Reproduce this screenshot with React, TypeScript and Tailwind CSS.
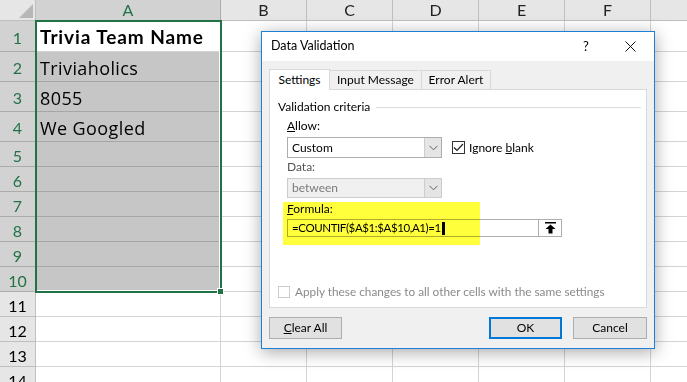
import React from 'react';

const colHeaders = [
  { label: 'A', w: 'w-[185px]', sel: true },
  { label: 'B', w: 'w-[86px]', sel: false },
  { label: 'C', w: 'w-[86px]', sel: false },
  { label: 'D', w: 'w-[86px]', sel: false },
  { label: 'E', w: 'w-[86px]', sel: false },
  { label: 'F', w: 'w-[86px]', sel: false },
];

const rows = [
  { n: 1, h: 'h-[31px]', text: 'Trivia Team Name', bold: true },
  { n: 2, h: 'h-[30px]', text: 'Triviaholics' },
  { n: 3, h: 'h-[30px]', text: '8055' },
  { n: 4, h: 'h-[30px]', text: 'We Googled' },
  { n: 5, h: 'h-[25px]' },
  { n: 6, h: 'h-[25px]' },
  { n: 7, h: 'h-[25px]' },
  { n: 8, h: 'h-[25px]' },
  { n: 9, h: 'h-[25px]' },
  { n: 10, h: 'h-[25px]' },
  { n: 11, h: 'h-[25px]' },
  { n: 12, h: 'h-[25px]' },
  { n: 13, h: 'h-[25px]' },
  { n: 14, h: 'h-[25px]' },
];

const sheetFont = { fontFamily: 'Lato, "Noto Sans", sans-serif' };
const cellFont = { fontFamily: '"Open Sans", "Noto Sans", sans-serif' };

function Chevron() {
  return (
    <svg width="9" height="6" viewBox="0 0 9 6">
      <polyline points="0.5,0.8 4.5,4.8 8.5,0.8" fill="none" stroke="#606060" strokeWidth="1" />
    </svg>
  );
}

function Combo({ value, disabled }: { value: string; disabled?: boolean }) {
  return (
    <div
      className={`flex w-[155px] border ${disabled ? 'h-[20px] border-[#cccccc] bg-[#f0f0f0] text-[#7a7a7a]' : 'h-[21px] border-[#adadad] bg-white text-black'}`}
    >
      <div className="flex-1 flex items-center pl-[4px]">{value}</div>
      <div className="w-[17px] flex items-center justify-center bg-[#e5e5e5] border-l border-[#cccccc]">
        <Chevron />
      </div>
    </div>
  );
}

function SpreadSheet() {
  return (
    <div className="flex flex-col w-full" style={sheetFont}>
      <div className="flex h-[21px]">
        <div className="w-[36px] shrink-0 bg-[#e6e6e6] border-r border-b border-[#bfbfbf] flex items-end justify-end p-[2px]">
          <svg width="14" height="14" viewBox="0 0 14 14">
            <polygon points="14,0 14,14 0,14" fill="#b7b7b7" />
          </svg>
        </div>
        {colHeaders.map((c) => (
          <div
            key={c.label}
            className={`${c.w} shrink-0 flex items-center justify-center text-[16px] border-r border-b ${c.sel ? 'bg-[#d2d2d2] text-[#217346] border-[#ababab]' : 'bg-[#e6e6e6] text-[#222222] border-[#bfbfbf]'}`}
          >
            {c.label}
          </div>
        ))}
        <div className="flex-1 bg-[#e6e6e6] border-b border-[#bfbfbf]" />
      </div>
      {rows.map((r) => {
        const sel = r.n <= 10;
        return (
          <div key={r.n} className={`flex ${r.h}`}>
            <div
              className={`w-[36px] shrink-0 flex items-center justify-center pt-[3px] text-[16px] border-r border-b ${sel ? 'bg-[#d2d2d2] text-[#217346] border-[#ababab]' : 'bg-[#e6e6e6] text-black border-[#bfbfbf]'}`}
            >
              {r.n}
            </div>
            <div
              className={`w-[185px] shrink-0 flex items-center pl-[4px] pt-[3px] text-black border-r border-b ${sel && r.n > 1 ? 'bg-[#c6c6c6] border-[#a6a6a6]' : 'bg-white border-[#d4d4d4]'} ${r.bold ? 'font-bold text-[19px] tracking-[0.9px]' : 'text-[18px] tracking-[0.4px]'}`}
              style={r.bold ? sheetFont : cellFont}
            >
              {r.text}
            </div>
            {colHeaders.slice(1).map((c) => (
              <div key={c.label} className={`${c.w} shrink-0 border-r border-b border-[#d4d4d4]`} />
            ))}
            <div className="flex-1 border-b border-[#d4d4d4]" />
          </div>
        );
      })}
    </div>
  );
}

function Dialog() {
  return (
    <div
      className="absolute left-[261px] top-[31px] w-[394px] h-[318px] border border-[#1c80d6] bg-[#f0f0f0] shadow-[0_3px_16px_rgba(0,0,0,0.35)] flex flex-col text-[12px] text-black"
      style={{ fontFamily: 'Lato, "Noto Sans", sans-serif' }}
    >
      <div className="h-[29px] bg-white flex items-center pl-[9px]">
        <span className="flex-1 text-[12.5px]">Data Validation</span>
        <span className="w-[20px] mr-[14px] text-center text-[13px]">?</span>
        <span className="w-[44px] flex justify-center pr-[4px]">
          <svg width="11" height="11" viewBox="0 0 11 11">
            <path d="M0.5 0.5 L10.5 10.5 M10.5 0.5 L0.5 10.5" stroke="#111" strokeWidth="1" />
          </svg>
        </span>
      </div>
      <div className="flex flex-col px-[7px] pt-[7px]">
        <div className="flex items-end h-[21px]">
          <div className="h-[21px] w-[61px] bg-white border border-b-0 border-[#d9d9d9] flex items-center justify-center relative top-[1px] z-10">
            Settings
          </div>
          <div className="h-[19px] w-[92px] border border-l-0 border-b-0 border-[#d9d9d9] flex items-center justify-center">
            Input Message
          </div>
          <div className="h-[19px] w-[69px] border border-l-0 border-b-0 border-[#d9d9d9] flex items-center justify-center">
            Error Alert
          </div>
        </div>
        <div className="relative h-[219px] bg-white border border-[#d9d9d9] flex flex-col">
          <div className="flex items-center pl-[8px] pr-[5px] mt-[9px] h-[16px]">
            <span>Validation criteria</span>
            <div className="flex-1 ml-[6px] h-px bg-[#dcdcdc]" />
          </div>
          <div className="pl-[17px] flex flex-col">
            <div className="mt-[3px] h-[16px] flex items-center">
              <span>
                <span className="underline">A</span>llow:
              </span>
            </div>
            <div className="flex items-center mt-[3px]">
              <Combo value="Custom" />
              <div className="ml-[10px] w-[13px] h-[13px] border border-[#333333] flex items-center justify-center">
                <svg width="11" height="9" viewBox="0 0 11 9">
                  <polyline points="1,4.5 4,7.5 10,1" fill="none" stroke="#222" strokeWidth="1.2" />
                </svg>
              </div>
              <span className="ml-[4px]">
                Ignore <span className="underline">b</span>lank
              </span>
            </div>
            <div className="mt-[1px] h-[16px] flex items-center">
              <span className="text-[#555555]">Data:</span>
            </div>
            <div className="mt-[3px]">
              <Combo value="between" disabled />
            </div>
            <div className="mt-[3px] h-[16px] flex items-center">
              <span>
                <span className="underline">F</span>ormula:
              </span>
            </div>
            <div className="flex mt-[2px] h-[18px]">
              <div className="w-[252px] border border-[#adadad] bg-white flex items-center pl-[4px]">
                <span className="text-[11.5px] tracking-[-0.4px]">=COUNTIF($A$1:$A$10,A1)=1</span>
                <span className="inline-block w-[3px] h-[13px] bg-black ml-[1px]" />
              </div>
              <div className="w-[23px] border border-l-0 border-[#adadad] bg-[#fdfdfd] flex items-center justify-center">
                <svg width="11" height="12" viewBox="0 0 11 12">
                  <rect x="0" y="0" width="11" height="1.5" fill="#000" />
                  <polygon points="5.5,2.5 10.5,7 7.5,7 7.5,11.5 3.5,11.5 3.5,7 0.5,7" fill="#000" />
                </svg>
              </div>
            </div>
          </div>
          <div className="absolute left-[13px] top-[112px] w-[197px] h-[43px] bg-[#ffff3c] mix-blend-multiply" />
          <div className="flex-1" />
          <div className="flex items-center pl-[8px] mb-[6px] text-[#8a8a8a]">
            <div className="w-[12px] h-[12px] border border-[#cccccc] bg-white" />
            <span className="ml-[5px] text-[11.8px]">Apply these changes to all other cells with the same settings</span>
          </div>
        </div>
        <div className="flex mt-[9px]">
          <div className="w-[73px] h-[22px] bg-[#e1e1e1] border border-[#adadad] flex items-center justify-center">
            <span>
              <span className="underline">C</span>lear All
            </span>
          </div>
          <div className="flex-1" />
          <div className="w-[73px] h-[22px] bg-[#e1e1e1] border-2 border-[#0078d7] flex items-center justify-center">
            OK
          </div>
          <div className="w-[74px] h-[22px] ml-[11px] bg-[#e1e1e1] border border-[#adadad] flex items-center justify-center">
            Cancel
          </div>
        </div>
      </div>
    </div>
  );
}

export default function App() {
  return (
    <div className="relative w-[687px] h-[382px] overflow-hidden bg-white">
      <SpreadSheet />
      <div className="absolute left-[35px] top-[20px] w-[187px] h-[273px] border-2 border-[#217346]">
        <div className="w-full h-full border border-white border-t-0 border-l-0" />
      </div>
      <div className="absolute left-[217px] top-[288px] w-[7px] h-[7px] bg-[#217346] border border-white" />
      <Dialog />
    </div>
  );
}
